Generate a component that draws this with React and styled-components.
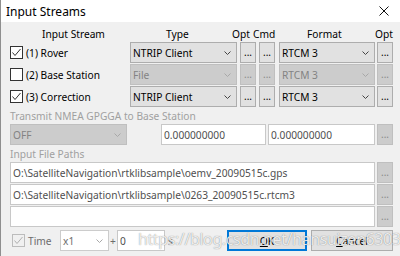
import React from 'react';
import styled, { createGlobalStyle } from 'styled-components';

const GlobalStyle = createGlobalStyle`
  html, body { margin: 0; padding: 0; background: #fff; }
  body { font-family: "Noto Sans", "Liberation Sans", sans-serif; }
`;

const Window = styled.div`
  position: relative;
  width: 400px;
  height: 256px;
  overflow: hidden;
  box-sizing: border-box;
  background: #f0f0f0;
  border-left: 1px solid #8f8f8f;
  font-family: "Noto Sans", "Liberation Sans", sans-serif;
  font-size: 10.2px;
  color: #000;
`;

const TitleBar = styled.div`
  height: 22px;
  background: #fff;
  display: flex;
  align-items: center;
  justify-content: space-between;
  padding: 0 11px 0 5px;
  font-size: 12px;
  color: #000;
`;

const Body = styled.div`
  padding: 0 7px 0 9px;
`;

const HeaderRow = styled.div`
  display: flex;
  height: 14px;
  margin-top: 6px;
  line-height: 13px;
`;

const HeadCell = styled.div`
  width: ${p => p.w}px;
  padding-left: ${p => p.pl || 0}px;
  box-sizing: border-box;
  white-space: nowrap;
`;

const Row = styled.div`
  display: flex;
  align-items: center;
  height: 21px;
  margin-bottom: 1px;
`;

const LabelCell = styled.div`
  width: ${p => p.w}px;
  margin-left: ${p => p.ml || 0}px;
  display: flex;
  align-items: center;
  white-space: nowrap;
  color: ${p => (p.dim ? '#6d6d6d' : '#000')};
`;

const Box = styled.span`
  width: 13px;
  height: 13px;
  box-sizing: border-box;
  border: 1px solid ${p => (p.disabled ? '#bcbcbc' : '#333')};
  background: ${p => (p.disabled ? 'transparent' : '#fff')};
  margin-right: 3px;
  display: flex;
  align-items: center;
  justify-content: center;
  flex: none;
`;

const Combo = styled.div`
  width: ${p => p.w}px;
  height: 21px;
  margin-left: ${p => p.ml || 0}px;
  box-sizing: border-box;
  border: 1px solid ${p => (p.flat ? '#cccccc' : p.disabled ? '#bfbfbf' : '#adadad')};
  background: ${p => (p.flat ? '#fff' : p.disabled ? '#cccccc' : '#e1e1e1')};
  color: ${p => (p.flat ? '#6d6d6d' : p.disabled ? '#838383' : '#000')};
  display: flex;
  align-items: center;
  justify-content: space-between;
  padding: 0 5px 0 2px;
  flex: none;
`;

const DotButton = styled.div`
  width: 16px;
  height: 21px;
  margin-left: ${p => p.ml || 0}px;
  box-sizing: border-box;
  border: 1px solid ${p => (p.disabled ? '#bfbfbf' : '#adadad')};
  background: ${p => (p.disabled ? '#cccccc' : '#e1e1e1')};
  color: ${p => (p.disabled ? '#8a8a8a' : '#000')};
  display: flex;
  align-items: center;
  justify-content: center;
  padding-bottom: 2px;
  font-size: 10px;
  flex: none;
`;

const Field = styled.div`
  width: ${p => p.w}px;
  height: 21px;
  margin-left: ${p => p.ml || 0}px;
  box-sizing: border-box;
  border: 1px solid #c8c8c8;
  background: #fff;
  color: #4f4f4f;
  display: flex;
  align-items: center;
  padding-left: 2px;
  white-space: nowrap;
  overflow: hidden;
  flex: none;
`;

const GroupLabel = styled.div`
  color: #a0a0a0;
  line-height: 13px;
  height: 13px;
  margin-top: ${p => p.mt}px;
  margin-bottom: 1px;
  white-space: nowrap;
`;

const BottomRow = styled.div`
  display: flex;
  align-items: center;
  height: 21px;
  margin-top: 3px;
`;

const Plus = styled.span`
  width: 8px;
  text-align: center;
  color: #6d6d6d;
  flex: none;
`;

const Unit = styled.span`
  margin-left: 3px;
  color: #6d6d6d;
`;

const PushButton = styled.div`
  width: ${p => p.w}px;
  height: 21px;
  margin-left: ${p => p.ml || 'auto'};
  box-sizing: border-box;
  border: ${p => (p.primary ? '2px solid #0078d7' : '1px solid #adadad')};
  background: #e1e1e1;
  display: flex;
  align-items: center;
  justify-content: center;
  flex: none;
`;

const Watermark = styled.div`
  position: absolute;
  left: 137px;
  top: 229px;
  font-size: 16px;
  line-height: 20px;
  letter-spacing: -0.4px;
  color: rgba(255, 255, 255, 0.85);
  text-shadow: 0 0 1px rgba(0, 0, 0, 0.5);
  white-space: nowrap;
  pointer-events: none;
`;

const Chevron = ({ disabled }) => (
  <svg width="7" height="4" viewBox="0 0 7 4">
    <polyline points="0.5,0.5 3.5,3.5 6.5,0.5" fill="none" stroke={disabled ? '#a8a8a8' : '#444'} strokeWidth="1" />
  </svg>
);

const Check = ({ checked, disabled }) => (
  <Box disabled={disabled}>
    {checked && (
      <svg width="11" height="11" viewBox="0 0 11 11">
        <polyline points="1.5,5.5 4,8.5 9.5,2" fill="none" stroke={disabled ? '#b0b0b0' : '#333'} strokeWidth="1" />
      </svg>
    )}
  </Box>
);

const CloseIcon = () => (
  <svg width="10" height="10" viewBox="0 0 10 10">
    <path d="M0.5 0.5 L9.5 9.5 M9.5 0.5 L0.5 9.5" stroke="#111" strokeWidth="1" />
  </svg>
);

const streams = [
  { label: '(1) Rover', on: true, type: 'NTRIP Client', fmt: 'RTCM 3', disabled: false },
  { label: '(2) Base Station', on: false, type: 'File', fmt: 'RTCM 3', disabled: true },
  { label: '(3) Correction', on: true, type: 'NTRIP Client', fmt: 'RTCM 3', disabled: false },
];

const paths = [
  'O:\\SatelliteNavigation\\rtklibsample\\oemv_20090515c.gps',
  'O:\\SatelliteNavigation\\rtklibsample\\0263_20090515c.rtcm3',
  '',
];

export default function App() {
  return (
    <>
      <GlobalStyle />
      <Window>
        <TitleBar>
          <span>Input Streams</span>
          <CloseIcon />
        </TitleBar>
        <Body>
          <HeaderRow>
            <HeadCell w={156} pl={32}>Input Stream</HeadCell>
            <HeadCell w={66}>Type</HeadCell>
            <HeadCell w={21}>Opt</HeadCell>
            <HeadCell w={54}>Cmd</HeadCell>
            <HeadCell w={68}>Format</HeadCell>
            <HeadCell w={18}>Opt</HeadCell>
          </HeaderRow>

          {streams.map(s => (
            <Row key={s.label}>
              <LabelCell w={120}>
                <Check checked={s.on} />
                {s.label}
              </LabelCell>
              <Combo w={107} disabled={s.disabled}>
                {s.type}
                <Chevron disabled={s.disabled} />
              </Combo>
              <DotButton ml={3} disabled={s.disabled}>...</DotButton>
              <DotButton ml={3} disabled={s.disabled}>...</DotButton>
              <Combo w={96} ml={4} disabled={s.disabled}>
                {s.fmt}
                <Chevron disabled={s.disabled} />
              </Combo>
              <DotButton ml={2} disabled={s.disabled}>...</DotButton>
            </Row>
          ))}

          <GroupLabel mt={3}>Transmit NMEA GPGGA to Base Station</GroupLabel>
          <Row>
            <Combo w={117} disabled>
              OFF
              <Chevron disabled />
            </Combo>
            <Field w={105} ml={34}>0.000000000</Field>
            <Field w={107} ml={2}>0.000000000</Field>
            <DotButton ml={2} disabled>...</DotButton>
          </Row>

          <GroupLabel mt={3}>Input File Paths</GroupLabel>
          {paths.map((p, i) => (
            <Row key={i}>
              <Field w={365}>{p}</Field>
              <DotButton ml={2} disabled>...</DotButton>
            </Row>
          ))}

          <BottomRow>
            <LabelCell w={48} ml={2} dim>
              <Check checked disabled />
              Time
            </LabelCell>
            <Combo w={49} flat disabled>
              x1
              <Chevron disabled />
            </Combo>
            <Plus>+</Plus>
            <Field w={48}>0</Field>
            <Unit>s</Unit>
            <PushButton w={80} primary>
              <span><u>O</u>K</span>
            </PushButton>
            <PushButton w={82} ml="4px">
              <span><u>C</u>ancel</span>
            </PushButton>
          </BottomRow>
        </Body>
        <Watermark>https://blog.csdn.net/hansuizen6303</Watermark>
      </Window>
    </>
  );
}
